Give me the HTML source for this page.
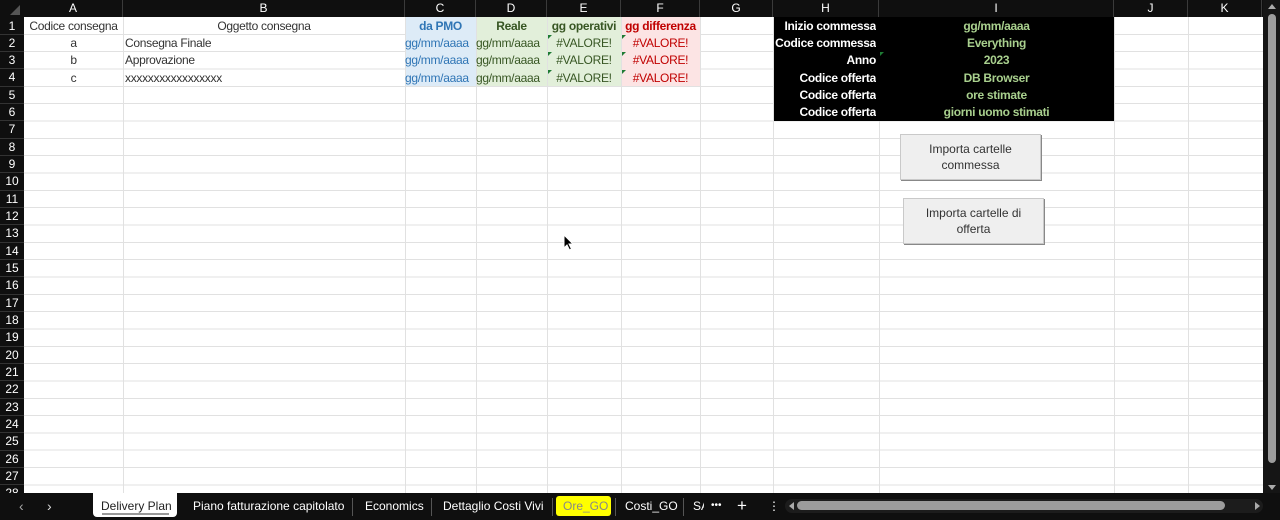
<!DOCTYPE html>
<html><head><meta charset="utf-8"><style>
*{margin:0;padding:0;box-sizing:border-box}
body{width:1280px;height:520px;background:#0f0f0f;position:relative;overflow:hidden;font-family:"Liberation Sans",sans-serif;font-size:12px}
.abs{position:absolute}
#sheet{position:absolute;left:24px;top:17px;width:1239px;height:476px;background:#fff;
background-image:repeating-linear-gradient(to bottom,transparent 0,transparent 16.33px,#e1e1e1 16.33px,#e1e1e1 17.33px);background-position:0 0.5px}
.vl{position:absolute;top:17px;height:476px;width:1px;background:#e1e1e1}
.hdr{position:absolute;top:0;height:17px;background:#0f0f0f;color:#fff;text-align:center;line-height:17px;font-size:12px;border-right:1px solid #3a3a3a}
.rn{position:absolute;left:0;width:24px;color:#fff;text-align:center;font-size:12px;background:#0f0f0f;border-bottom:1px solid #333}
.c{position:absolute;height:17px;line-height:17px;white-space:nowrap;overflow:hidden;font-size:12px;letter-spacing:-0.3px}
.blk{color:#fff;font-weight:bold;text-align:right}
.grn{color:#a9d08e;font-weight:bold;text-align:center}
.tri{position:absolute;width:0;height:0;border-top:4px solid #1e7b34;border-right:4px solid transparent}
.btn{position:absolute;background:#efefef;border:1px solid #c9c9c9;box-shadow:1px 1px 0 #888;text-align:center;color:#333;font-size:12px;line-height:16px;display:flex;align-items:center;justify-content:center}
.tab{position:absolute;top:496px;height:20px;line-height:20px;color:#fff;font-size:12px;white-space:nowrap}
.sep{position:absolute;top:498px;width:1px;height:18px;background:#555}
</style></head><body>
<div id="sheet"></div>
<!-- fills -->
<div class="abs" style="left:405px;top:17px;width:71px;height:69px;background:#ddebf7"></div>
<div class="abs" style="left:476px;top:17px;width:145px;height:69px;background:#e2efda"></div>
<div class="abs" style="left:621px;top:17px;width:79px;height:69px;background:#fce4e4"></div>
<div class="abs" style="left:773px;top:17px;width:341px;height:104px;background:#000"></div>
<div class="vl" style="left:123px"></div><div class="vl" style="left:405px"></div><div class="vl" style="left:476px"></div><div class="vl" style="left:547px"></div><div class="vl" style="left:621px"></div><div class="vl" style="left:700px"></div><div class="vl" style="left:773px"></div><div class="vl" style="left:879px;top:121px;height:372px"></div><div class="vl" style="left:1114px"></div><div class="vl" style="left:1188px"></div>
<!-- column headers -->
<div class="abs" style="left:0;top:0;width:1262px;height:17px;background:#0f0f0f"></div>
<div class="abs" style="left:10px;top:5px;width:0;height:0;border-left:10px solid transparent;border-bottom:10px solid #555"></div>
<div class="hdr" style="left:24px;width:99px">A</div>
<div class="hdr" style="left:123px;width:282px">B</div>
<div class="hdr" style="left:405px;width:71px">C</div>
<div class="hdr" style="left:476px;width:71px">D</div>
<div class="hdr" style="left:547px;width:74px">E</div>
<div class="hdr" style="left:621px;width:79px">F</div>
<div class="hdr" style="left:700px;width:73px">G</div>
<div class="hdr" style="left:773px;width:106px">H</div>
<div class="hdr" style="left:879px;width:235px">I</div>
<div class="hdr" style="left:1114px;width:74px">J</div>
<div class="hdr" style="left:1188px;width:74px">K</div>
<div id="rows"></div>
<script>
var h='';for(var i=1;i<=28;i++){var t=17.5+(i-1)*17.33;h+='<div class="rn" style="top:'+t+'px;height:17.33px;line-height:17px">'+i+'</div>';}
document.getElementById('rows').innerHTML=h;
</script>
<!-- row1 -->
<div class="c" style="left:24px;top:17.5px;width:99px;text-align:center;color:#333">Codice consegna</div>
<div class="c" style="left:123px;top:17.5px;width:282px;text-align:center;color:#333">Oggetto consegna</div>
<div class="c" style="left:405px;top:17.5px;width:71px;text-align:center;color:#2f75b5;font-weight:bold">da PMO</div>
<div class="c" style="left:476px;top:17.5px;width:71px;text-align:center;color:#375623;font-weight:bold">Reale</div>
<div class="c" style="left:547px;top:17.5px;width:74px;text-align:center;color:#375623;font-weight:bold">gg operativi</div>
<div class="c" style="left:621px;top:17.5px;width:79px;text-align:center;color:#c00000;font-weight:bold">gg differenza</div>
<!-- rows 2-4 -->
<div class="c" style="left:24px;top:34.8px;width:99px;text-align:center;color:#333">a</div>
<div class="c" style="left:24px;top:52.2px;width:99px;text-align:center;color:#333">b</div>
<div class="c" style="left:24px;top:69.5px;width:99px;text-align:center;color:#333">c</div>
<div class="c" style="left:125px;top:34.8px;color:#333">Consegna Finale</div>
<div class="c" style="left:125px;top:52.2px;color:#333">Approvazione</div>
<div class="c" style="left:125px;top:69.5px;color:#333">xxxxxxxxxxxxxxxxx</div>
<div class="c" style="left:405px;top:34.8px;width:71px;color:#2f75b5">gg/mm/aaaa</div>
<div class="c" style="left:405px;top:52.2px;width:71px;color:#2f75b5">gg/mm/aaaa</div>
<div class="c" style="left:405px;top:69.5px;width:71px;color:#2f75b5">gg/mm/aaaa</div>
<div class="c" style="left:476px;top:34.8px;width:71px;color:#375623">gg/mm/aaaa</div>
<div class="c" style="left:476px;top:52.2px;width:71px;color:#375623">gg/mm/aaaa</div>
<div class="c" style="left:476px;top:69.5px;width:71px;color:#375623">gg/mm/aaaa</div>
<div class="c" style="left:547px;top:34.8px;width:74px;text-align:center;color:#375623">#VALORE!</div>
<div class="c" style="left:547px;top:52.2px;width:74px;text-align:center;color:#375623">#VALORE!</div>
<div class="c" style="left:547px;top:69.5px;width:74px;text-align:center;color:#375623">#VALORE!</div>
<div class="c" style="left:621px;top:34.8px;width:79px;text-align:center;color:#c00000">#VALORE!</div>
<div class="c" style="left:621px;top:52.2px;width:79px;text-align:center;color:#c00000">#VALORE!</div>
<div class="c" style="left:621px;top:69.5px;width:79px;text-align:center;color:#c00000">#VALORE!</div>
<div class="tri" style="left:548px;top:35px"></div><div class="tri" style="left:548px;top:52px"></div><div class="tri" style="left:548px;top:70px"></div>
<div class="tri" style="left:622px;top:35px"></div><div class="tri" style="left:622px;top:52px"></div><div class="tri" style="left:622px;top:70px"></div>
<!-- black block -->
<div class="c blk" style="left:773px;top:17.5px;width:103px">Inizio commessa</div>
<div class="c blk" style="left:773px;top:34.8px;width:103px">Codice commessa</div>
<div class="c blk" style="left:773px;top:52.2px;width:103px">Anno</div>
<div class="c blk" style="left:773px;top:69.5px;width:103px">Codice offerta</div>
<div class="c blk" style="left:773px;top:86.8px;width:103px">Codice offerta</div>
<div class="c blk" style="left:773px;top:104.2px;width:103px">Codice offerta</div>
<div class="tri" style="left:880px;top:52px"></div>
<div class="c grn" style="left:879px;top:17.5px;width:235px">gg/mm/aaaa</div>
<div class="c grn" style="left:879px;top:34.8px;width:235px">Everything</div>
<div class="c grn" style="left:879px;top:52.2px;width:235px">2023</div>
<div class="c grn" style="left:879px;top:69.5px;width:235px">DB Browser</div>
<div class="c grn" style="left:879px;top:86.8px;width:235px">ore stimate</div>
<div class="c grn" style="left:879px;top:104.2px;width:235px">giorni uomo stimati</div>
<!-- buttons -->
<div class="btn" style="left:900px;top:134px;width:141px;height:46px">Importa cartelle<br>commessa</div>
<div class="btn" style="left:903px;top:198px;width:141px;height:46px">Importa cartelle di<br>offerta</div>
<!-- cursor -->
<svg class="abs" style="left:563px;top:234px" width="12" height="18" viewBox="0 0 12 18"><path d="M1 1 L1 14 L4 11 L6.5 16 L8.5 15 L6 10 L10 10 Z" fill="#000" stroke="#fff" stroke-width="1"/></svg>
<!-- vertical scrollbar -->
<div class="abs" style="left:1263px;top:0;width:17px;height:493px;background:#151515"></div>
<div class="abs" style="left:1268px;top:4px;width:0;height:0;border-left:4px solid transparent;border-right:4px solid transparent;border-bottom:5px solid #aaa"></div>
<div class="abs" style="left:1268px;top:14px;width:8px;height:449px;background:#9c9c9c;border-radius:4px"></div>
<div class="abs" style="left:1268px;top:485px;width:0;height:0;border-left:4px solid transparent;border-right:4px solid transparent;border-top:5px solid #aaa"></div>
<!-- bottom tabs -->
<div class="abs" style="left:0;top:493px;width:1280px;height:27px;background:#0f0f0f"></div>
<div class="abs" style="left:19px;top:498px;color:#aaa;font-size:14px">&#8249;</div>
<div class="abs" style="left:47px;top:498px;color:#ddd;font-size:14px">&#8250;</div>
<div class="abs" style="left:93px;top:493px;width:84px;height:24px;background:#fff;border-radius:0 0 4px 4px"></div>
<div class="tab" style="left:101px;color:#222">Delivery Plan</div>
<div class="abs" style="left:102px;top:513px;width:67px;height:2px;background:#999"></div>
<div class="tab" style="left:193px">Piano fatturazione capitolato</div>
<div class="sep" style="left:352px"></div>
<div class="tab" style="left:365px">Economics</div>
<div class="sep" style="left:431px"></div>
<div class="tab" style="left:443px">Dettaglio Costi Vivi</div>
<div class="sep" style="left:552px"></div>
<div class="abs" style="left:556px;top:496px;width:55px;height:20px;background:#ffff00;border-radius:3px"></div>
<div class="tab" style="left:563px;color:#888">Ore_GO</div>
<div class="sep" style="left:615px"></div>
<div class="tab" style="left:625px">Costi_GO</div>
<div class="sep" style="left:683px"></div>
<div class="tab" style="left:693px;width:11px;overflow:hidden">SAL</div>
<div class="tab" style="left:711px;font-size:10px">&#8226;&#8226;&#8226;</div>
<div class="tab" style="left:737px;font-size:17px">+</div>
<div class="tab" style="left:768px;font-size:12px">&#8942;</div>
<div class="abs" style="left:785px;top:499px;width:478px;height:14px;background:#1c1c1c;border-radius:7px"></div>
<div class="abs" style="left:789px;top:502px;width:0;height:0;border-top:4px solid transparent;border-bottom:4px solid transparent;border-right:5px solid #aaa"></div>
<div class="abs" style="left:797px;top:501px;width:428px;height:9px;background:#9c9c9c;border-radius:5px"></div>
<div class="abs" style="left:1255px;top:502px;width:0;height:0;border-top:4px solid transparent;border-bottom:4px solid transparent;border-left:5px solid #aaa"></div>
</body></html>
